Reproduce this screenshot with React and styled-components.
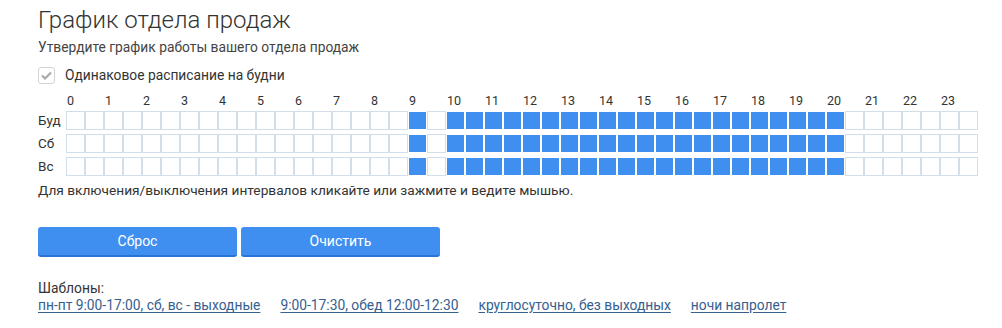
import styled, { createGlobalStyle } from "styled-components";

const GlobalStyle = createGlobalStyle`
  body {
    margin: 0;
    background: #fff;
    font-family: Roboto, "Liberation Sans", Arial, sans-serif;
    color: #333;
  }
`;

const Page = styled.div`
  padding: 4px 0 0 38px;
  width: 964px;
`;

const Title = styled.h1`
  margin: 0;
  font-size: 24px;
  font-weight: 300;
  line-height: 32px;
  color: #333;
`;

const Subtitle = styled.p`
  margin: 3px 0 0;
  font-size: 13.8px;
  line-height: 16px;
  color: #444;
`;

const CheckRow = styled.label`
  display: flex;
  align-items: center;
  gap: 10px;
  margin-top: 11px;
  font-size: 13.8px;
  color: #333;
  height: 18px;
`;

const CheckBox = styled.span`
  width: 15px;
  height: 15px;
  border: 1px solid #d4d4d4;
  border-radius: 3px;
  display: flex;
  align-items: center;
  justify-content: center;
  background: #fff;
`;

const Schedule = styled.div`
  display: grid;
  grid-template-columns: 28px repeat(48, 19px);
  row-gap: 4px;
  margin-top: 10px;
`;

const HourLabel = styled.span`
  grid-column: span 2;
  font-size: 12.5px;
  line-height: 14px;
  padding-left: 1px;
  color: #333;
  margin-bottom: -1px;
`;

const DayLabel = styled.span`
  font-size: 13.5px;
  line-height: 19px;
  color: #333;
`;

const Cell = styled.span`
  height: 19px;
  box-sizing: border-box;
  border: 1px solid ${(p) => (p.$on ? "#fff" : "#d3deeb")};
  background: ${(p) => (p.$on ? "#3f8ff0" : "#fff")};
`;

const Hint = styled.p`
  margin: 6px 0 0;
  font-size: 13.7px;
  line-height: 16px;
  color: #333;
`;

const Buttons = styled.div`
  display: flex;
  gap: 4px;
  margin-top: 29px;
`;

const Button = styled.button`
  width: 199px;
  height: 30px;
  border: none;
  border-bottom: 2px solid #2a73d6;
  border-radius: 3px;
  background: #3f8ff0;
  color: #fff;
  font-family: Roboto, "Liberation Sans", Arial, sans-serif;
  font-size: 14px;
  cursor: pointer;
  padding: 0;
`;

const TemplatesTitle = styled.div`
  margin-top: 23px;
  font-size: 13.8px;
  line-height: 16px;
  color: #333;
`;

const Links = styled.div`
  display: flex;
  gap: 20px;
  margin-top: 1px;
`;

const Link = styled.a`
  font-size: 13.8px;
  line-height: 16px;
  color: #35608f;
  text-decoration: underline;
  text-underline-offset: 2px;
  cursor: pointer;
`;

const days = ["Буд", "Сб", "Вс"];
const isOn = (i) => i === 18 || (i >= 20 && i <= 40);

export default function App() {
  return (
    <Page>
      <GlobalStyle />
      <Title>График отдела продаж</Title>
      <Subtitle>Утвердите график работы вашего отдела продаж</Subtitle>
      <CheckRow>
        <CheckBox>
          <svg width="11" height="9" viewBox="0 0 11 9">
            <path d="M1 4.5 L4 7.5 L10 1.5" fill="none" stroke="#a9a9a9" strokeWidth="2.2" />
          </svg>
        </CheckBox>
        Одинаковое расписание на будни
      </CheckRow>
      <Schedule>
        <span />
        {Array.from({ length: 24 }, (_, h) => (
          <HourLabel key={h}>{h}</HourLabel>
        ))}
        {days.map((d) => [
          <DayLabel key={d}>{d}</DayLabel>,
          ...Array.from({ length: 48 }, (_, i) => <Cell key={d + i} $on={isOn(i)} />),
        ])}
      </Schedule>
      <Hint>Для включения/выключения интервалов кликайте или зажмите и ведите мышью.</Hint>
      <Buttons>
        <Button>Сброс</Button>
        <Button>Очистить</Button>
      </Buttons>
      <TemplatesTitle>Шаблоны:</TemplatesTitle>
      <Links>
        <Link>пн-пт 9:00-17:00, сб, вс - выходные</Link>
        <Link>9:00-17:30, обед 12:00-12:30</Link>
        <Link>круглосуточно, без выходных</Link>
        <Link>ночи напролет</Link>
      </Links>
    </Page>
  );
}
